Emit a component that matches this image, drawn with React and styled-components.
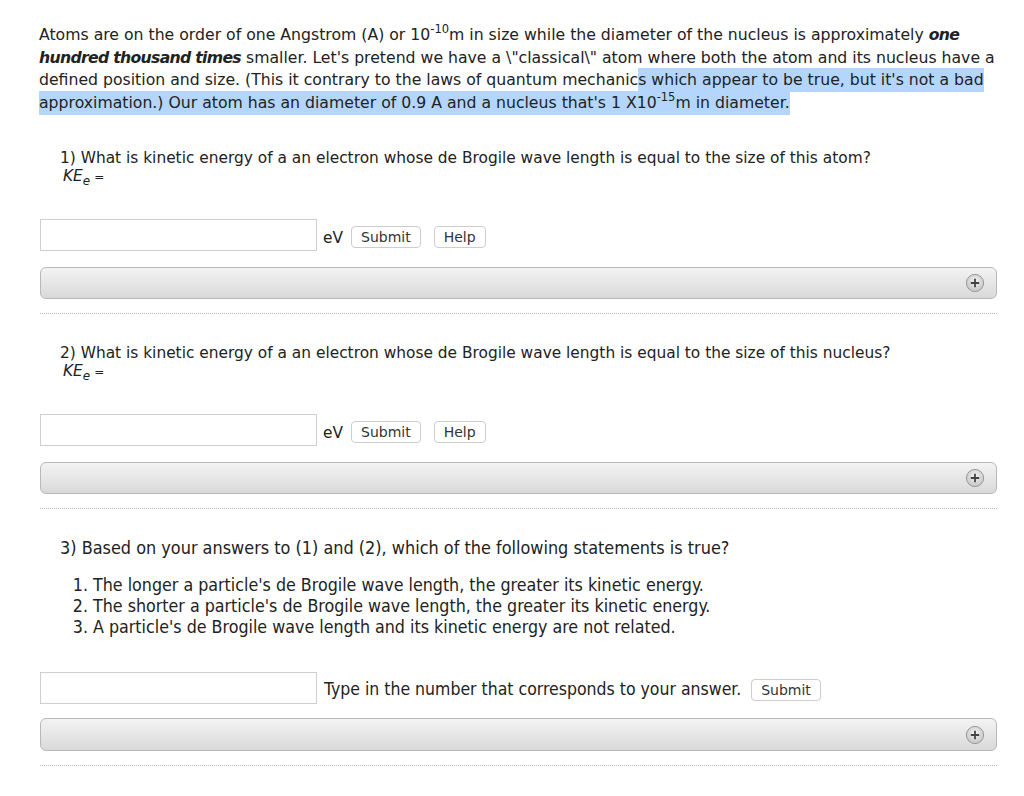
import React from "react";
import styled, { createGlobalStyle } from "styled-components";

const GlobalStyle = createGlobalStyle`
  body {
    margin: 0;
    background: #fff;
    color: #222;
    font-family: "DejaVu Sans", Verdana, sans-serif;
  }
`;

const Page = styled.div`
  width: 957px;
  padding: 24px 0 40px 40px;
`;

const Intro = styled.p`
  margin: 0 0 0 -1px;
  font-size: 15.7px;
  line-height: 22.6px;
  white-space: nowrap;
  color: #222;

  b {
    letter-spacing: -0.7px;
  }

  sup {
    font-size: 11.5px;
    line-height: 0;
    vertical-align: baseline;
    position: relative;
    top: -7px;
  }
`;

const Mark = styled.span`
  background: #b4d6fd;
  padding: 2px 0 3px;
  box-decoration-break: clone;
`;

const Question = styled.div`
  margin: ${(p) => p.$top}px 0 0 20px;
  font-size: 15.4px;
  line-height: 18px;
`;

const Formula = styled.div`
  margin-left: 3px;
  font-style: italic;
  font-size: 15.4px;
  line-height: 18px;

  sub {
    font-size: 12px;
    line-height: 0;
    vertical-align: baseline;
    position: relative;
    top: 4px;
  }
`;

const Equals = styled.span`
  font-style: normal;
  font-size: 12px;
  margin-left: 4px;
`;

const AnswerRow = styled.div`
  display: flex;
  align-items: center;
  margin-top: ${(p) => p.$top}px;
  height: 32px;
`;

const AnswerInput = styled.input`
  box-sizing: border-box;
  width: 277px;
  height: 32px;
  margin: 0;
  border: 1px solid #cfcfcf;
  background: #fff;
  outline: none;
`;

const Unit = styled.span`
  margin: 0 8px 0 6px;
  font-size: 15.4px;
  color: #222;
  position: relative;
  top: 3px;
`;

const condensed = `
  font-family: "DejaVu Sans Condensed", "DejaVu Sans", sans-serif;
  font-stretch: condensed;
`;

const Note = styled.span`
  ${condensed}
  font-size: 17.5px;
  margin: 0 10px 0 7px;
  color: #222;
  position: relative;
  top: 1px;
`;

const Button = styled.button`
  box-sizing: border-box;
  height: 22px;
  margin: 0 13px 0 0;
  padding: 0 9px;
  border: 1px solid #cdcdcd;
  border-radius: 4px;
  background: #fff;
  font-family: "DejaVu Sans", sans-serif;
  font-size: 14px;
  color: #333;
  position: relative;
  top: 2px;
`;

const Bar = styled.div`
  box-sizing: border-box;
  display: flex;
  align-items: center;
  justify-content: flex-end;
  height: ${(p) => p.$h || 32}px;
  margin-top: ${(p) => p.$top}px;
  padding-right: 11px;
  border: 1px solid #b8b8b8;
  border-radius: 6px;
  background: linear-gradient(#f3f3f3, #d9d9d9);
`;

const Divider = styled.div`
  margin-top: 14px;
  border-top: 1px dotted #b9b9b9;
`;

const Choices = styled.ol`
  ${condensed}
  font-size: 17.7px;
  margin: 18px 0 0 0;
  padding-left: 53px;
  line-height: 21px;
`;

const WideQuestion = styled(Question)`
  ${condensed}
  font-size: 17.9px;
`;

const PlusIcon = () => (
  <svg width="20" height="20" viewBox="0 0 20 20">
    <defs>
      <radialGradient id="pg" cx="50%" cy="40%" r="60%">
        <stop offset="0%" stopColor="#f4f4f4" />
        <stop offset="100%" stopColor="#c4c4c4" />
      </radialGradient>
    </defs>
    <circle cx="10" cy="10" r="8.6" fill="url(#pg)" stroke="#9a9a9a" strokeWidth="1" />
    <path d="M10 5.8v8.4M5.8 10h8.4" stroke="#444" strokeWidth="1.8" />
  </svg>
);

const HintBar = ({ top, h }) => (
  <>
    <Bar $top={top} $h={h}>
      <PlusIcon />
    </Bar>
    <Divider />
  </>
);

const KE = () => (
  <Formula>
    KE<sub>e</sub>
    <Equals>=</Equals>
  </Formula>
);

const App = () => (
  <Page>
    <GlobalStyle />
    <Intro>
      Atoms are on the order of one Angstrom (A) or 10<sup>-10</sup>m in size while the diameter of the nucleus is approximately <b><i>one</i></b>
      <br />
      <b><i>hundred thousand times</i></b> smaller. Let's pretend we have a \"classical\" atom where both the atom and its nucleus have a
      <br />
      defined position and size. (This it contrary to the laws of quantum mechanic
      <Mark>
        s which appear to be true, but it's not a bad
        <br />
        approximation.) Our atom has an diameter of 0.9 A and a nucleus that's 1 X10<sup>-15</sup>m in diameter.
      </Mark>
    </Intro>

    <Question $top={35}>
      1) What is kinetic energy of a an electron whose de Brogile wave length is equal to the size of this atom?
      <KE />
    </Question>
    <AnswerRow $top={33}>
      <AnswerInput />
      <Unit>eV</Unit>
      <Button>Submit</Button>
      <Button>Help</Button>
    </AnswerRow>
    <HintBar top={16} />

    <Question $top={30}>
      2) What is kinetic energy of a an electron whose de Brogile wave length is equal to the size of this nucleus?
      <KE />
    </Question>
    <AnswerRow $top={33}>
      <AnswerInput />
      <Unit>eV</Unit>
      <Button>Submit</Button>
      <Button>Help</Button>
    </AnswerRow>
    <HintBar top={16} />

    <WideQuestion $top={30}>
      3) Based on your answers to (1) and (2), which of the following statements is true?
    </WideQuestion>
    <Choices>
      <li>The longer a particle's de Brogile wave length, the greater its kinetic energy.</li>
      <li>The shorter a particle's de Brogile wave length, the greater its kinetic energy.</li>
      <li>A particle's de Brogile wave length and its kinetic energy are not related.</li>
    </Choices>
    <AnswerRow $top={34}>
      <AnswerInput />
      <Note>Type in the number that corresponds to your answer.</Note>
      <Button>Submit</Button>
    </AnswerRow>
    <HintBar top={14} h={33} />
  </Page>
);

export default App;
